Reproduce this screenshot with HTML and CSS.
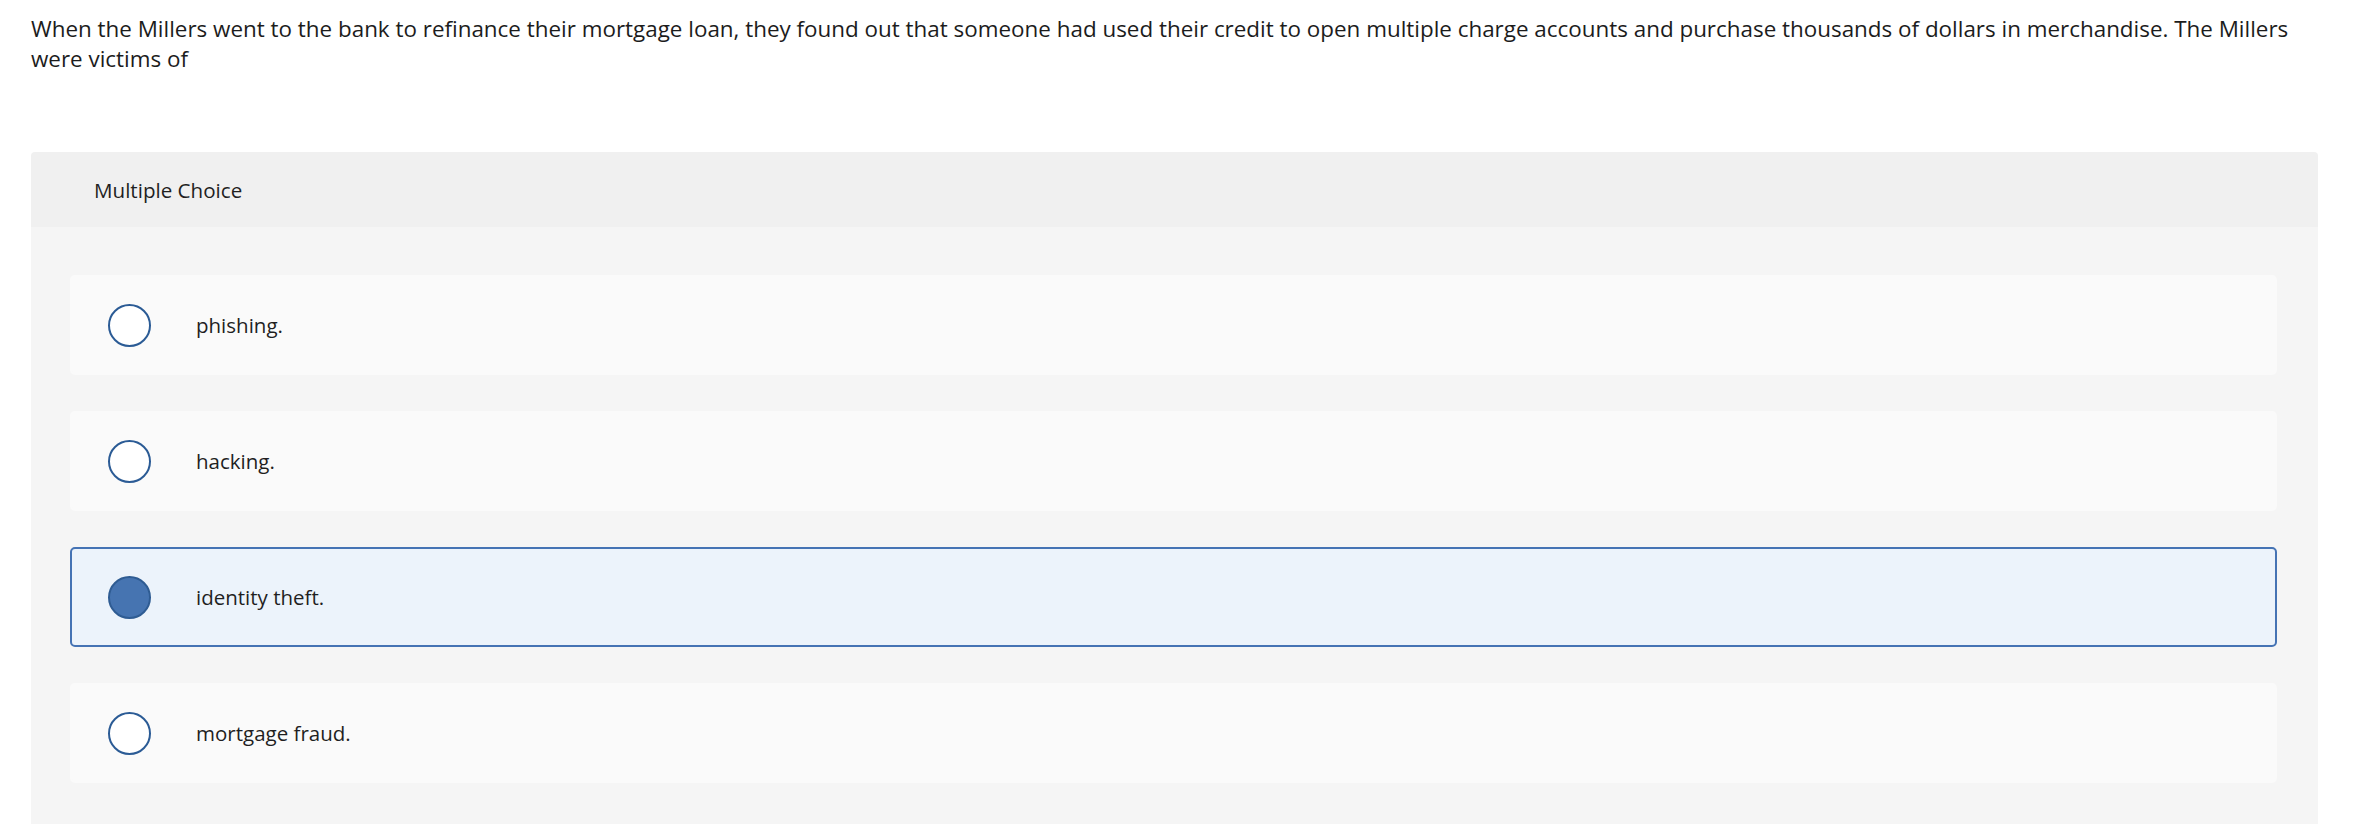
FILE: index.html
```html
<!DOCTYPE html>
<html lang="en">
<head>
<meta charset="utf-8">
<title>Multiple Choice</title>
<link rel="stylesheet" href="styles.css">
</head>
<body>
<p class="question">When the Millers went to the bank to refinance their mortgage loan, they found out that someone had used their credit to open multiple charge accounts and purchase thousands of dollars in merchandise. The Millers were victims of</p>
<section class="card">
  <header class="card-header">Multiple Choice</header>
  <div class="card-body">
    <div class="option"><span class="radio"></span><span class="label">phishing.</span></div>
    <div class="option"><span class="radio"></span><span class="label">hacking.</span></div>
    <div class="option selected"><span class="radio"></span><span class="label">identity theft.</span></div>
    <div class="option"><span class="radio"></span><span class="label">mortgage fraud.</span></div>
  </div>
</section>
</body>
</html>
```
FILE: styles.css
```css
html, body { background: #ffffff; }
body {
  margin: 0;
  padding: 14px 50px 0 31px;
  font-family: "Open Sans", "Noto Sans", sans-serif;
  color: #1c1c1c;
}
.question {
  margin: 0;
  font-size: 22.42px;
  line-height: 30px;
}
.card {
  margin-top: 78px;
  border-radius: 4px 4px 0 0;
  overflow: hidden;
}
.card-header {
  height: 75px;
  background: #f0f0f0;
  padding-left: 63px;
  display: flex;
  align-items: center;
  font-size: 20.6px;
  color: #1f1f1f;
}
.card-body {
  background: #f5f5f5;
  padding: 48px 41px 48px 39px;
  display: flex;
  flex-direction: column;
  gap: 36px;
}
.option {
  box-sizing: border-box;
  height: 100px;
  background: #fafafa;
  border: 2px solid #fafafa;
  border-radius: 5px;
  display: flex;
  align-items: center;
  padding-left: 36px;
  font-size: 20.5px;
  color: #1f1f1f;
}
.option.selected {
  background: #ecf3fb;
  border-color: #4573b4;
}
.radio {
  box-sizing: border-box;
  width: 43px;
  height: 43px;
  border-radius: 50%;
  border: 2px solid #2b5b95;
  background: #ffffff;
  margin-right: 45px;
  flex: none;
}
.option.selected .radio {
  background: #4674b1;
  border-color: #2f5c93;
}
```
